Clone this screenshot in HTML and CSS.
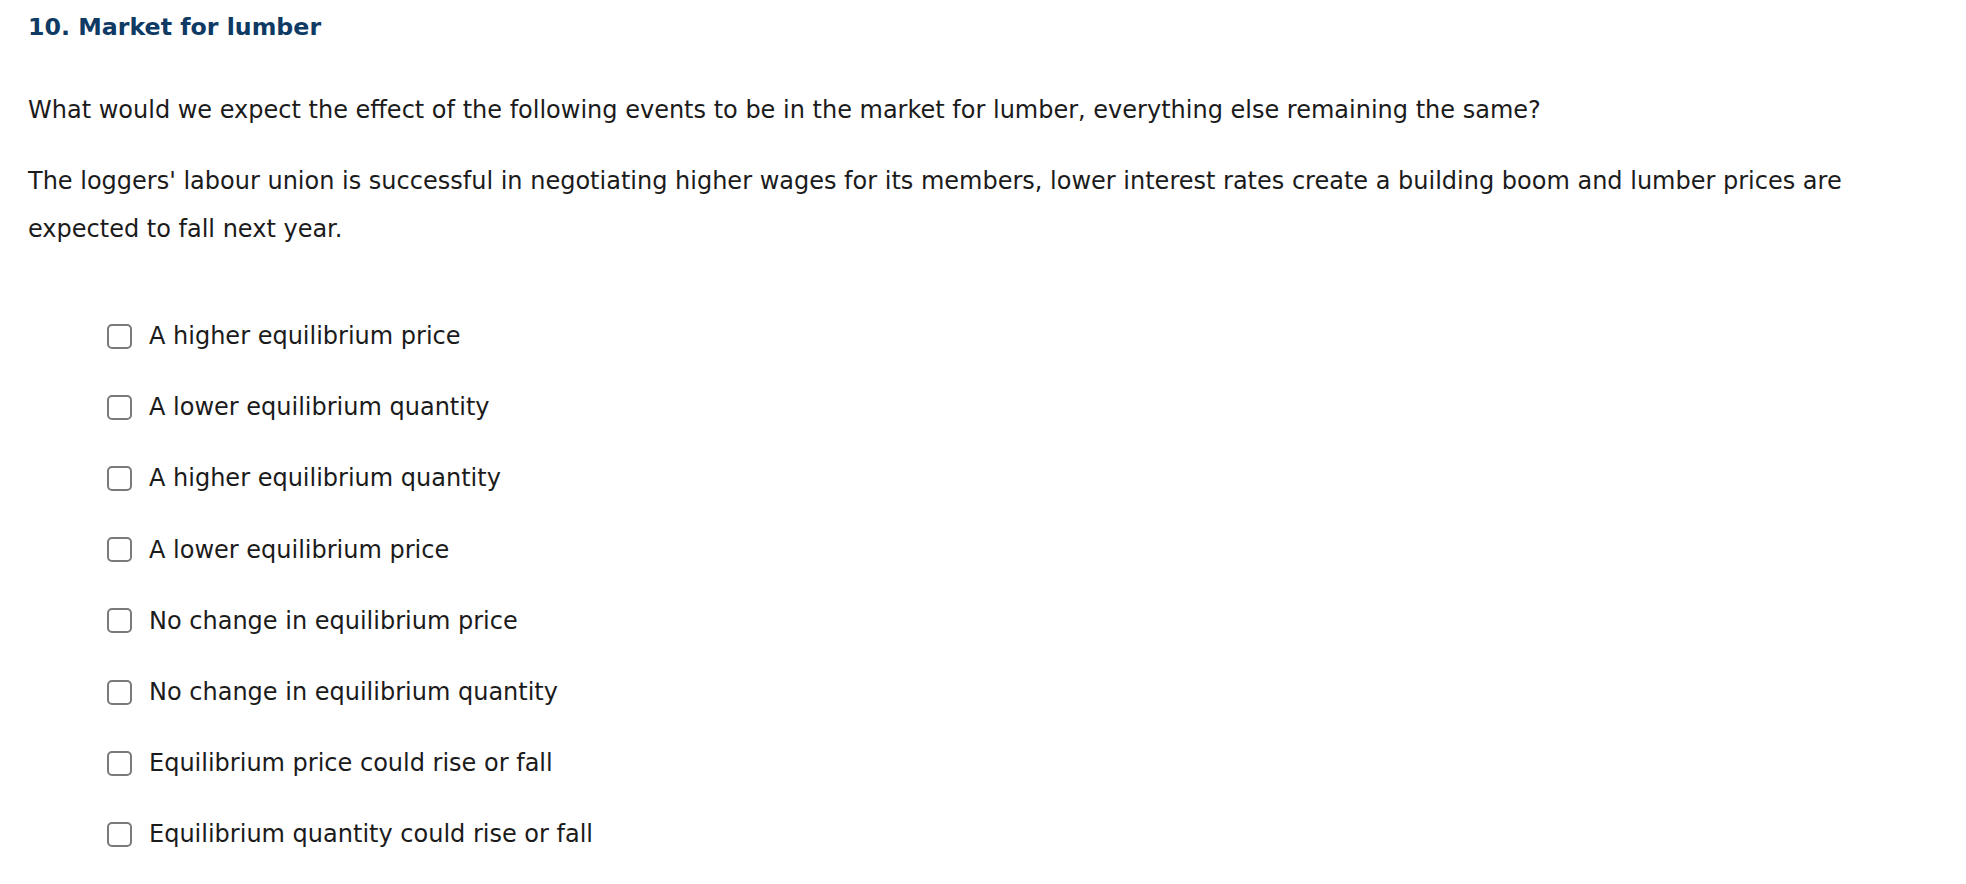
FILE: index.html
```html
<!DOCTYPE html>
<html lang="en">
<head>
<meta charset="utf-8">
<title>Market for lumber</title>
<link rel="stylesheet" href="styles.css">
</head>
<body>
<main class="question">
  <h2 class="title">10. Market for lumber</h2>
  <p class="prompt">What would we expect the effect of the following events to be in the market for lumber, everything else remaining the same?</p>
  <p class="scenario">The loggers' labour union is successful in negotiating higher wages for its members, lower interest rates create a building boom and lumber prices are expected to fall next year.</p>
  <ul class="options">
    <li class="option"><span class="box"></span><span class="label">A higher equilibrium price</span></li>
    <li class="option"><span class="box"></span><span class="label">A lower equilibrium quantity</span></li>
    <li class="option"><span class="box"></span><span class="label">A higher equilibrium quantity</span></li>
    <li class="option"><span class="box"></span><span class="label">A lower equilibrium price</span></li>
    <li class="option"><span class="box"></span><span class="label">No change in equilibrium price</span></li>
    <li class="option"><span class="box"></span><span class="label">No change in equilibrium quantity</span></li>
    <li class="option"><span class="box"></span><span class="label">Equilibrium price could rise or fall</span></li>
    <li class="option"><span class="box"></span><span class="label">Equilibrium quantity could rise or fall</span></li>
  </ul>
</main>
</body>
</html>
```
FILE: styles.css
```css
html, body {
  margin: 0;
  padding: 0;
  background: #ffffff;
}
body {
  font-family: "DejaVu Sans", Verdana, sans-serif;
  color: #1b1b1b;
}
.question {
  padding: 9px 28px 0 28px;
}
.title {
  margin: 0;
  font-size: 23.7px;
  line-height: 36px;
  font-weight: bold;
  color: #0e3a64;
}
.prompt {
  margin: 41px 0 0 0;
  font-size: 24px;
  line-height: 48px;
}
.scenario {
  margin: 23px 0 0 0;
  font-size: 24px;
  line-height: 48px;
}
.options {
  list-style: none;
  margin: 47.5px 0 0 0;
  padding: 0 0 0 79px;
}
.option {
  display: flex;
  align-items: center;
  height: 71.2px;
  font-size: 24px;
}
.box {
  box-sizing: border-box;
  width: 25px;
  height: 25px;
  border: 2px solid #7a7a7a;
  border-radius: 5px;
  flex: none;
}
.label {
  margin-left: 17px;
}
```
